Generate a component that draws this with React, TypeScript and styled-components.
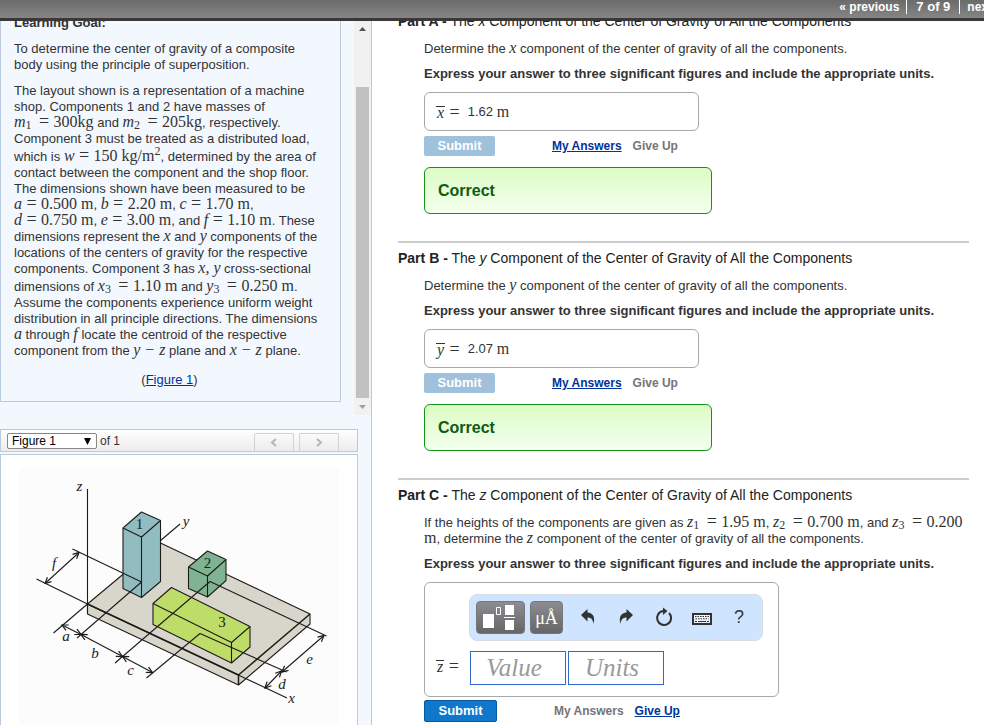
import React from "react";
import styled, { createGlobalStyle } from "styled-components";

const sans = '"Liberation Sans", Arial, sans-serif';
const serif = '"Liberation Serif", "Times New Roman", serif';

const GlobalStyle = createGlobalStyle`
  * { box-sizing: border-box; }
  html, body, #root { height: 100%; }
  body { margin: 0; overflow: hidden; background: #fff; color: #333; font: 13px/16px ${sans}; }
  p { margin: 0; }
  a { color: #039; }
`;

/* ---------- page frame ---------- */
const Page = styled.div`
  display: grid;
  grid-template-columns: 372px minmax(0, 1fr);
  height: 100vh;
`;
const TopBar = styled.header`
  position: fixed;
  inset: 0 0 auto 0;
  z-index: 2;
  height: 21px;
  overflow: hidden;
  display: flex;
  justify-content: flex-end;
  background: linear-gradient(#6a6c6a, #858585);
  border-bottom: 3px solid #3c3838;
`;
const Pager = styled.nav`
  display: flex;
  align-items: flex-start;
  height: 14px;
  margin-right: -25px;
  color: #fff;
  font-size: 12px;
  line-height: 14px;
  font-weight: bold;
  a { color: #fff; text-decoration: none; padding: 0 7px; }
  span { padding: 0 9px; font-size: 13px; border: solid #fff; border-width: 0 1px; }
`;

/* ---------- left column ---------- */
const Side = styled.aside`
  display: flex;
  flex-direction: column;
  min-height: 0;
  background: #f3f8ff;
  border-right: 1px solid #b8cade;
`;
const ScrollArea = styled.div`
  display: flex;
  justify-content: space-between;
  padding-top: 21px;
  height: 415px;
  flex: none;
`;
const Intro = styled.section`
  width: 341px;
  height: 381px;
  padding: 0 15px 0 13px;
  border: solid #b8cade;
  border-width: 0 1px 1px 1px;
  overflow: hidden;
`;
const Goal = styled.h2`
  margin: -6px 0 10px;
  font-size: 13px;
  line-height: 16px;
`;
const Para = styled.p`
  margin-bottom: 10px;
`;
const FigureRef = styled.p`
  margin-top: 13px;
  text-align: center;
`;
const Track = styled.div`
  width: 17px;
  display: flex;
  flex-direction: column;
  align-items: center;
  background: #f1f1f1;
`;
const Thumb = styled.div`
  flex: 1;
  width: 13px;
  margin-top: 49px;
  background: #c1c1c1;
`;
const Arrow = styled.svg`
  width: 17px;
  height: 17px;
  flex: none;
`;
const FigureBar = styled.div`
  display: flex;
  align-items: center;
  flex: none;
  width: 358px;
  height: 23px;
  margin-top: 14px;
  padding: 0 18px 0 6px;
  border: 1px solid #b8cade;
  background: linear-gradient(#fff, #ececec);
  font-size: 12px;
`;
const PickWrap = styled.label`
  display: flex;
  align-items: center;
  gap: 3px;
  margin-right: auto;
`;
const Pick = styled.select`
  width: 90px;
  height: 16px;
  padding: 0 4px;
  appearance: none;
  border: 1px solid #888;
  border-radius: 2px;
  color: #000;
  background: #fff;
  font: 12px/14px ${sans};
`;
const PickBox = styled.span`
  position: relative;
  display: flex;
  svg { position: absolute; right: 6px; top: 5px; width: 7px; height: 7px; pointer-events: none; }
`;
const Step = styled.button`
  width: 40px;
  height: 18px;
  margin: 3px 0 0 5px;
  padding: 0;
  display: flex;
  align-items: center;
  justify-content: center;
  border: 1px solid #d2d2d2;
  border-bottom: 0;
  border-radius: 2px 2px 0 0;
  background: linear-gradient(#fafafa, #ececec);
  svg { width: 8px; height: 9px; }
`;
const FigurePanel = styled.figure`
  flex: 1;
  min-height: 0;
  width: 358px;
  margin: 2px 0 0;
  padding: 13px 18px 0;
  overflow: hidden;
  background: #fff;
  border: solid #b8cade;
  border-width: 1px 1px 0 1px;
`;
const Diagram = styled.svg`
  display: block;
  width: 320px;
  height: 258px;
  background: #fcfcfc;
  text { font-family: ${serif}; font-size: 15px; fill: #222; stroke: none; text-anchor: middle; }
`;
const Labels = styled.g`
  font-style: italic;
`;

/* ---------- right column ---------- */
const Main = styled.main`
  padding: 13px 15px 0 26px;
  overflow: hidden;
`;
const Part = styled.section`
  & + & { margin-top: 27px; padding-top: 7px; border-top: 2px solid #ccc; }
`;
const PartTitle = styled.h2`
  margin: 0;
  color: #222;
  font-size: 14px;
  line-height: 16px;
  font-weight: normal;
`;
const PartBody = styled.div`
  padding: 12px 0 0 26px;
`;
const Instruct = styled.p`
  margin: 9px 0 10px;
  font-weight: bold;
`;
const Answer = styled.div`
  display: flex;
  align-items: center;
  width: 275px;
  height: 39px;
  padding-left: 11px;
  border: 1px solid #a9a9a9;
  border-radius: 6px;
`;
const Actions = styled.div<{ $open?: boolean }>`
  display: flex;
  align-items: center;
  margin-top: ${p => (p.$open ? "3px" : "5px")};
  font-size: 12px;
  font-weight: bold;
  color: #757575;
  a, span { margin-right: 11px; }
`;
const Submit = styled.button<{ $open?: boolean }>`
  width: ${p => (p.$open ? "73px" : "71px")};
  height: ${p => (p.$open ? "22px" : "20px")};
  margin: 0 57px 0 0;
  padding: 0;
  border: ${p => (p.$open ? "1px solid #085a9c" : "0")};
  border-radius: 2px;
  background: ${p => (p.$open ? "#0f78cd" : "#9fc1dc")};
  color: #fff;
  font: bold 13px/18px ${sans};
`;
const Correct = styled.div`
  display: flex;
  align-items: center;
  width: 288px;
  height: 47px;
  margin-top: 11px;
  padding-left: 13px;
  border: 1px solid #149414;
  border-radius: 6px;
  background: linear-gradient(#dcfcc4, #f4fff0);
  color: #0f5c0f;
  font-size: 16px;
  font-weight: bold;
`;
const Editor = styled.div`
  width: 355px;
  height: 115px;
  padding: 11px 15px 0 11px;
  border: 1px solid #a9a9a9;
  border-radius: 6px;
`;
const Tools = styled.div`
  display: flex;
  align-items: center;
  height: 47px;
  margin-left: 33px;
  padding-left: 6px;
  border: 1px solid #d8dde4;
  border-radius: 8px;
  background: #cfe5ff;
`;
const DarkTool = styled.button<{ $wide?: boolean }>`
  width: ${p => (p.$wide ? "49px" : "33px")};
  height: 33px;
  margin-right: 5px;
  padding: 0;
  border: 1px solid #777;
  border-radius: 4px;
  background: linear-gradient(#8d8c92, #666);
  color: #fff;
  font: 18px/30px ${serif};
  svg { display: block; width: 47px; height: 31px; }
`;
const Tool = styled.button`
  width: 38px;
  height: 33px;
  padding: 0;
  border: 0;
  background: none;
  color: #333;
  font: 18px/33px ${sans};
  svg { display: block; width: 24px; height: 24px; margin: 0 auto; }
`;
const Entry = styled.div`
  display: flex;
  align-items: center;
  gap: 2px;
  margin-top: 10px;
`;
const EntryLabel = styled.span`
  width: 32px;
`;
const Field = styled.input`
  width: 96px;
  height: 34px;
  padding: 0 8px 0 0;
  border: 1px solid #36c;
  text-align: center;
  font: italic 25px/30px ${serif};
  color: #333;
  &::placeholder { color: #999; opacity: 1; }
`;

/* ---------- formulas ---------- */
const Formula = styled.span<{ $tall?: boolean }>`
  font-family: ${serif};
  font-size: 16px;
  line-height: ${p => (p.$tall ? "18px" : "0")};
  white-space: nowrap;
  sub, sup { font-size: 12px; line-height: 0; }
  sub { vertical-align: -2px; margin-right: 3px; }
  sup { vertical-align: 6px; }
`;
const Eq = styled.span`
  display: inline-block;
  width: 13px;
  margin: 0 3px;
  text-align: center;
  font-size: 18px;
  line-height: 0;
`;
const Bar = styled.i`
  display: inline-block;
  padding: 0 1px;
  line-height: 11px;
  border-top: 1px solid #333;
`;

const V = ({ children }: { children: React.ReactNode }) => (
  <Formula><i>{children}</i></Formula>
);
type EqnProps = { v: string; sub?: string; value: React.ReactNode; tall?: boolean };
const Eqn = ({ v, sub, value, tall }: EqnProps) => (
  <Formula $tall={tall}><i>{v}</i>{sub && <sub>{sub}</sub>}<Eq>=</Eq>{value}</Formula>
);

/* ---------- figure ---------- */
const Dim = ({ d }: { d: string }) => (
  <path d={d} markerStart="url(#tip)" markerEnd="url(#tip)" />
);
const ShopFigure = () => (
  <Diagram viewBox="19 468 320 258" role="img" aria-label="Machine shop layout">
    <defs>
      <marker id="tip" viewBox="0 0 8 8" refX="7" refY="4" markerWidth="8" markerHeight="8" orient="auto-start-reverse" markerUnits="userSpaceOnUse">
        <path d="M1 1L7 4L1 7" fill="none" stroke="#1c1c1c" strokeWidth="1.2" />
      </marker>
    </defs>
    <g fill="none" stroke="#1c1c1c" strokeWidth="1.1" strokeLinejoin="round">
      <path d="M87.5 604L160.5 543L310 614V624L238.5 685L87.5 614Z" fill="#d8d6ca" />
      <path d="M87.5 604L238.5 675L310 614M238.5 675V685" strokeWidth="1.5" />
      <path d="M87.5 489V614M160 541L180 524M36.5 579L87.5 604L287 698M87.5 604L53.5 633" />
      <g fill="#92bdc0">
        <path d="M141.5 512L160.5 520.5V581.5L141.5 597.5L123 588.5V528Z" />
        <path d="M123 528L141.5 537L160.5 520.5M141.5 537V597.5" />
      </g>
      <g fill="#7fb391">
        <path d="M207.5 551L226 559.5V580.5L207.5 597L188.5 588.5V567Z" />
        <path d="M188.5 567L207.5 576L226 559.5M207.5 576V597" />
      </g>
      <path d="M171.5 587.5L250 626.5V647L231.5 663L153 624.5V603.5Z" fill="#bddc68" />
      <path d="M153 603.5L231.5 642.5L250 626.5M231.5 642.5V663" />
      <path d="M72.5 549L141.5 582L77 638" />
      <path d="M115 663L210 581.5L326.5 636" />
      <path d="M146.5 678L200 633.5L286.5 672" />
      <Dim d="M45 583.5L79 552.5" />
      <Dim d="M62 625L81 634.5" />
      <Dim d="M81 634.5L122.5 656.5" />
      <Dim d="M122.5 656.5L152.5 672.5" />
      <Dim d="M265 688L281.5 671" />
      <Dim d="M282 672L324 635.5" />
    </g>
    <text x="139.5" y="529">1</text>
    <text x="207.5" y="568">2</text>
    <text x="222" y="627">3</text>
    <Labels>
      <text x="79.5" y="491">z</text>
      <text x="186" y="526">y</text>
      <text x="54" y="568">f</text>
      <text x="66" y="641">a</text>
      <text x="95" y="658">b</text>
      <text x="130.5" y="675">c</text>
      <text x="282" y="689">d</text>
      <text x="309.5" y="664">e</text>
      <text x="291.5" y="703">x</text>
    </Labels>
  </Diagram>
);

const Chevron = ({ d }: { d: string }) => (
  <svg viewBox="0 0 8 9"><path d={d} fill="none" stroke="#b5b5b5" strokeWidth="2" /></svg>
);

type SolvedProps = { letter: string; axis: string; value: string };
const SolvedPart = ({ letter, axis, value }: SolvedProps) => (
  <Part>
    <PartTitle><b>Part {letter} -</b> The <i>{axis}</i> Component of the Center of Gravity of All the Components</PartTitle>
    <PartBody>
      <p>Determine the <V>{axis}</V> component of the center of gravity of all the components.</p>
      <Instruct>Express your answer to three significant figures and include the appropriate units.</Instruct>
      <Answer>
        <Formula><Bar>{axis}</Bar><Eq>=</Eq></Formula>&nbsp;{value}&nbsp;<Formula>m</Formula>
      </Answer>
      <Actions>
        <Submit type="button" disabled>Submit</Submit>
        <a href="#answers">My Answers</a><span>Give Up</span>
      </Actions>
      <Correct>Correct</Correct>
    </PartBody>
  </Part>
);

export default function App() {
  return (
    <>
      <GlobalStyle />
      <TopBar>
        <Pager>
          <a href="#previous">« previous</a>
          <span>7 of 9</span>
          <a href="#next">next »</a>
        </Pager>
      </TopBar>
      <Page>
        <Side>
          <ScrollArea>
            <Intro>
              <Goal>Learning Goal:</Goal>
              <Para>To determine the center of gravity of a composite body using the principle of superposition.</Para>
              <Para>
                The layout shown is a representation of a machine shop. Components 1 and 2 have masses of{" "}
                <Eqn v="m" sub="1" value="300kg" /> and <Eqn v="m" sub="2" value="205kg" />, respectively.
                Component 3 must be treated as a distributed load, which is{" "}
                <Eqn tall v="w" value={<>150 kg/m<sup>2</sup></>} />, determined by the area of contact between
                the component and the shop floor. The dimensions shown have been measured to be{" "}
                <Eqn v="a" value="0.500 m" />, <Eqn v="b" value="2.20 m" />, <Eqn v="c" value="1.70 m" />,{" "}
                <Eqn v="d" value="0.750 m" />, <Eqn v="e" value="3.00 m" />, and <Eqn v="f" value="1.10 m" />.
                {" "}These dimensions represent the <V>x</V> and <V>y</V> components of the locations of the
                centers of gravity for the respective components. Component 3 has <V>x, y</V> cross-sectional
                dimensions of <Eqn v="x" sub="3" value="1.10 m" /> and <Eqn tall v="y" sub="3" value="0.250 m" />.
                Assume the components experience uniform weight distribution in all principle directions. The
                dimensions <V>a</V> through <V>f</V> locate the centroid of the respective component from
                the <V>y − z</V> plane and <V>x − z</V> plane.
              </Para>
              <FigureRef>(<a href="#figure">Figure 1</a>)</FigureRef>
            </Intro>
            <Track>
              <Arrow viewBox="0 0 17 17"><path d="M5 10L8.500 6L12 10Z" fill="#505050" /></Arrow>
              <Thumb />
              <Arrow viewBox="0 0 17 17"><path d="M5 7L8.500 11L12 7Z" fill="#a0a0a0" /></Arrow>
            </Track>
          </ScrollArea>
          <FigureBar id="figure">
            <PickWrap>
              <PickBox>
                <Pick aria-label="Figure"><option>Figure 1</option></Pick>
                <svg viewBox="0 0 7 7"><path d="M0 0H7L3.500 7Z" fill="#000" /></svg>
              </PickBox>
              of 1
            </PickWrap>
            <Step type="button" aria-label="Previous figure"><Chevron d="M6 1L2 4.500L6 8" /></Step>
            <Step type="button" aria-label="Next figure"><Chevron d="M2 1L6 4.500L2 8" /></Step>
          </FigureBar>
          <FigurePanel><ShopFigure /></FigurePanel>
        </Side>
        <Main>
          <SolvedPart letter="A" axis="x" value="1.62" />
          <SolvedPart letter="B" axis="y" value="2.07" />
          <Part>
            <PartTitle><b>Part C -</b> The <i>z</i> Component of the Center of Gravity of All the Components</PartTitle>
            <PartBody>
              <p>
                If the heights of the components are given as <Eqn v="z" sub="1" value="1.95 m" />,{" "}
                <Eqn v="z" sub="2" value="0.700 m" />, and <Eqn v="z" sub="3" value="0.200" />{" "}
                <Formula>m</Formula>, determine the <V>z</V> component of the center of gravity of all the components.
              </p>
              <Instruct>Express your answer to three significant figures and include the appropriate units.</Instruct>
              <Editor>
                <Tools>
                  <DarkTool type="button" $wide aria-label="Templates">
                    <svg viewBox="0 0 47 31" fill="#fff">
                      <path d="M6 12h11v14H6zM28 3h9v10h-9zM28 18h9v10h-9zM27 15h11v1H27z" />
                      <path d="M19.500 5.500h4v7h-4z" fill="none" stroke="#fff" />
                    </svg>
                  </DarkTool>
                  <DarkTool type="button" aria-label="Symbols">μÅ</DarkTool>
                  <Tool type="button" aria-label="Undo">
                    <svg viewBox="0 0 24 24"><path d="M6 9L12.500 3V6.500C18 7 20.500 11 18.500 18C18 13.500 16 11.500 12.500 11.500V15.500Z" fill="#333" /></svg>
                  </Tool>
                  <Tool type="button" aria-label="Redo">
                    <svg viewBox="0 0 24 24"><path d="M20 9L13.500 3V6.500C8 7 5.500 11 7.500 18C8 13.500 10 11.500 13.500 11.500V15.500Z" fill="#333" /></svg>
                  </Tool>
                  <Tool type="button" aria-label="Reset">
                    <svg viewBox="0 0 24 24">
                      <path d="M18 7A7 7 0 1 1 12.500 5" fill="none" stroke="#333" strokeWidth="2" />
                      <path d="M12 1.500L16.500 5L12 9Z" fill="#333" />
                    </svg>
                  </Tool>
                  <Tool type="button" aria-label="Keyboard">
                    <svg viewBox="0 0 24 24">
                      <path d="M4 8h18v10H4z" fill="#edf5ff" stroke="#333" strokeWidth="2" />
                      <path d="M6 10.500h14M6.500 12.800h13" stroke="#333" strokeDasharray="1.500 1" />
                      <path d="M6 15.500h2M9 15.500h8M18 15.500h2" stroke="#333" />
                    </svg>
                  </Tool>
                  <Tool type="button" aria-label="Help">?</Tool>
                </Tools>
                <Entry>
                  <EntryLabel><Formula><Bar>z</Bar><Eq>=</Eq></Formula></EntryLabel>
                  <Field aria-label="Value" placeholder="Value" />
                  <Field aria-label="Units" placeholder="Units" />
                </Entry>
              </Editor>
              <Actions $open>
                <Submit type="button" $open>Submit</Submit>
                <span>My Answers</span><a href="#giveup">Give Up</a>
              </Actions>
            </PartBody>
          </Part>
        </Main>
      </Page>
    </>
  );
}
